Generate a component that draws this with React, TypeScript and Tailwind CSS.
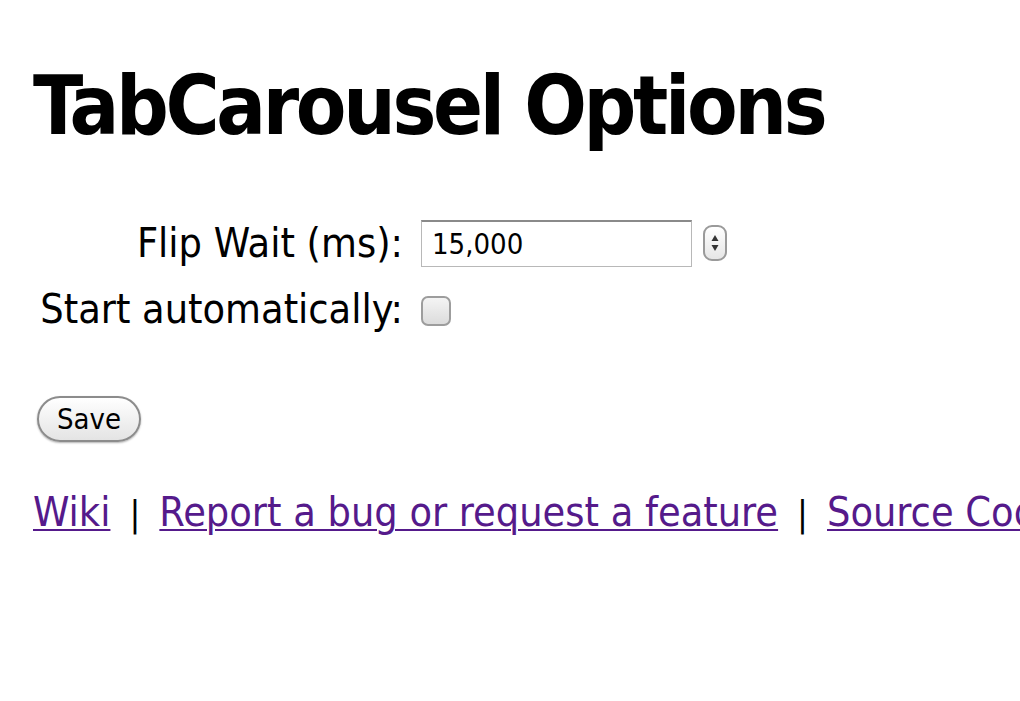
import React, { useState } from 'react';

const font = "font-['DejaVu_Sans_Condensed','DejaVu_Sans',sans-serif]";

const App: React.FC = () => {
  const [wait, setWait] = useState('15,000');
  const [auto, setAuto] = useState(false);

  return (
    <div className={`min-h-[701px] w-[1020px] overflow-hidden bg-white text-black ${font}`}>
      <div className="pl-[33px] pt-[61px]">
        <h1 className="whitespace-nowrap text-[82px] font-bold leading-[90px] tracking-[-3.3px]">TabCarousel Options</h1>

        {/* Options form */}
        <div className="mt-[68px] grid grid-cols-[370px_auto] items-center gap-x-[18px] gap-y-[18px]">
          <label className="text-right text-[41px] leading-[48px]">Flip Wait (ms):</label>
          <div className="flex items-center gap-[11px]">
            <input
              value={wait}
              onChange={(e) => setWait(e.target.value)}
              className="h-[47px] w-[271px] border border-[#b8b8b8] border-t-2 border-t-[#8a8a8a] bg-white px-[10px] text-[29px] outline-none"
            />
            <div className="flex h-[36px] w-[24px] flex-col items-center justify-center rounded-[9px] border-2 border-[#9a9a9a] bg-gradient-to-b from-white to-[#e6e6e6]">
              <svg width="12" height="24" viewBox="0 0 12 24">
                <path d="M6 4 L9.5 10 L2.5 10 Z" fill="#333" />
                <path d="M6 20 L9.5 14 L2.5 14 Z" fill="#333" />
              </svg>
            </div>
          </div>
          <label className="text-right text-[41px] leading-[48px]">Start automatically:</label>
          <div className="flex items-center pt-[4px]">
            <button
              onClick={() => setAuto(!auto)}
              className="h-[30px] w-[30px] rounded-[7px] border-2 border-[#9d9d9d] bg-gradient-to-b from-[#f4f4f4] to-[#dcdcdc]"
            >
              {auto && <span className="text-[22px] leading-none">✓</span>}
            </button>
          </div>
        </div>

        <button className="ml-[4px] mt-[63px] h-[46px] w-[104px] rounded-full border-2 border-[#8c8c8c] bg-gradient-to-b from-white to-[#e4e4e4] text-[29px] leading-none shadow-[0_1px_2px_rgba(0,0,0,0.3)]">
          Save
        </button>

        <div className="mt-[46px] whitespace-nowrap text-[41px] leading-[48px]">
          <a href="#" className="text-[#551a8b] underline decoration-2 underline-offset-[3px]">Wiki</a>
          <span className="mx-[19px] text-[36px]">|</span>
          <a href="#" className="text-[#551a8b] underline decoration-2 underline-offset-[3px]">Report a bug or request a feature</a>
          <span className="mx-[19px] text-[36px]">|</span>
          <a href="#" className="text-[#551a8b] underline decoration-2 underline-offset-[3px]">Source Code</a>
        </div>
      </div>
    </div>
  );
};

export default App;
